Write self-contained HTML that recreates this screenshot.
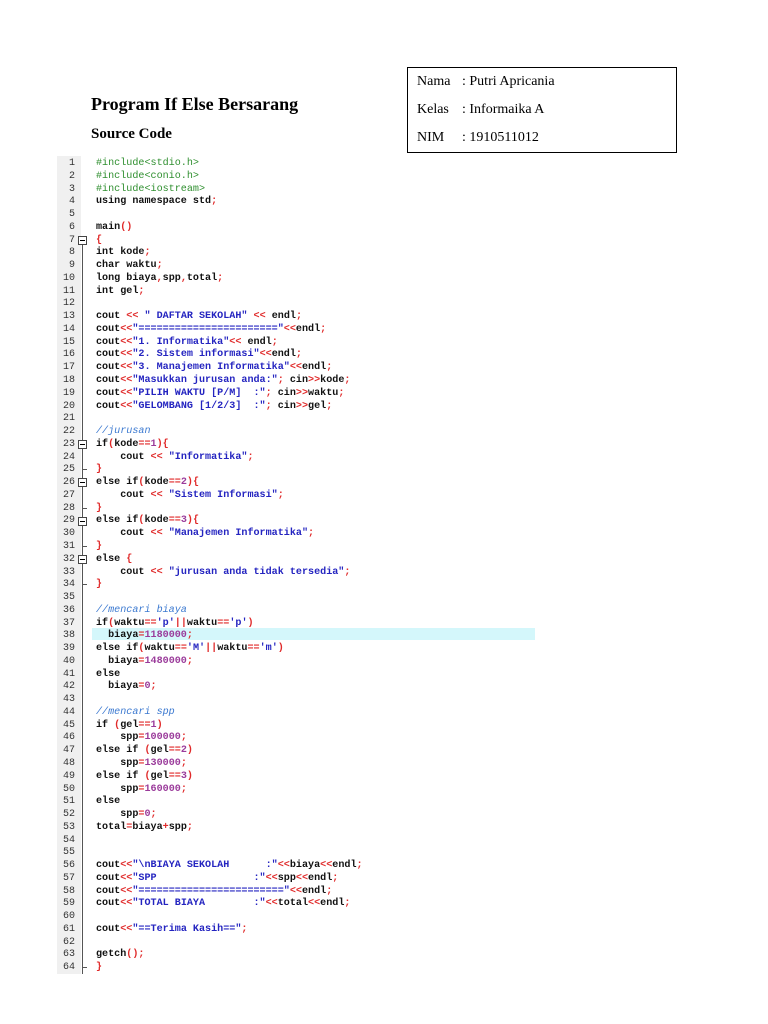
<!DOCTYPE html>
<html><head><meta charset="utf-8"><style>
body{margin:0;background:#fff;width:768px;height:1024px;position:relative;overflow:hidden;font-family:"Liberation Serif",serif}
.box{position:absolute;left:407px;top:67px;width:268px;height:84px;border:1px solid #000}
.box div{position:absolute;left:9px;top:0;font-size:14px;color:#000}
.box span{position:absolute;left:45px;white-space:nowrap}
h1{position:absolute;left:91px;top:94px;margin:0;font-size:18px;font-weight:bold}
h2{position:absolute;left:91px;top:126px;margin:0;font-size:15px;font-weight:bold}
.gut{position:absolute;left:57px;top:156px;width:24px;height:818px;background:#f0f0f0}
.fl{position:absolute;left:82px;width:1px;background:#555}
.hl{position:absolute;left:92px;top:628px;width:443px;height:12px;background:#d4f7fb}
.nums{position:absolute;left:57px;top:158px;width:18px;text-align:right;font:10px/12.76px "Liberation Mono",monospace;color:#333;white-space:pre}
pre{position:absolute;left:96px;top:158px;margin:0;font:10.1px/12.76px "Liberation Mono",monospace;color:#111;font-weight:bold}
.g{color:#2f8f2f;font-weight:normal}.r{color:#e02a2a}.s{color:#2424c0}.n{color:#9a3a9a}.c{color:#3a78d0;font-style:italic;font-weight:normal}
.fb{position:absolute;left:78px;width:9px;height:9px;border:1px solid #444;background:#fff;box-sizing:border-box}
.fb:after{content:"";position:absolute;left:1px;top:3px;width:5px;height:1px;background:#000}
.tk{position:absolute;left:82px;width:5px;height:1px;background:#555}
</style></head><body>
<div class="box">
<div style="top:6px">Nama<span>: Putri Apricania</span></div>
<div style="top:34px">Kelas<span>: Informaika A</span></div>
<div style="top:62px">NIM<span>: 1910511012</span></div>
</div>
<h1>Program If Else Bersarang</h1>
<h2>Source Code</h2>
<div class="gut"></div>
<div class="hl"></div>
<div class="fl" style="top:244px;height:730px"></div>
<div class="fb" style="top:236px"></div>
<div class="fb" style="top:440px"></div><div class="tk" style="top:469px"></div>
<div class="fb" style="top:478px"></div><div class="tk" style="top:508px"></div>
<div class="fb" style="top:517px"></div><div class="tk" style="top:546px"></div>
<div class="fb" style="top:555px"></div><div class="tk" style="top:584px"></div>
<div class="tk" style="top:967px"></div>
<div class="nums">1
2
3
4
5
6
7
8
9
10
11
12
13
14
15
16
17
18
19
20
21
22
23
24
25
26
27
28
29
30
31
32
33
34
35
36
37
38
39
40
41
42
43
44
45
46
47
48
49
50
51
52
53
54
55
56
57
58
59
60
61
62
63
64</div>
<pre><span class="g">#include&lt;stdio.h&gt;</span>
<span class="g">#include&lt;conio.h&gt;</span>
<span class="g">#include&lt;iostream&gt;</span>
using namespace std<span class="r">;</span>

main<span class="r">()</span>
<span class="r">{</span>
int kode<span class="r">;</span>
char waktu<span class="r">;</span>
long biaya<span class="r">,</span>spp<span class="r">,</span>total<span class="r">;</span>
int gel<span class="r">;</span>

cout <span class="r">&lt;&lt;</span> <span class="s">" DAFTAR SEKOLAH"</span> <span class="r">&lt;&lt;</span> endl<span class="r">;</span>
cout<span class="r">&lt;&lt;</span><span class="s">"======================="</span><span class="r">&lt;&lt;</span>endl<span class="r">;</span>
cout<span class="r">&lt;&lt;</span><span class="s">"1. Informatika"</span><span class="r">&lt;&lt;</span> endl<span class="r">;</span>
cout<span class="r">&lt;&lt;</span><span class="s">"2. Sistem informasi"</span><span class="r">&lt;&lt;</span>endl<span class="r">;</span>
cout<span class="r">&lt;&lt;</span><span class="s">"3. Manajemen Informatika"</span><span class="r">&lt;&lt;</span>endl<span class="r">;</span>
cout<span class="r">&lt;&lt;</span><span class="s">"Masukkan jurusan anda:"</span><span class="r">;</span> cin<span class="r">&gt;&gt;</span>kode<span class="r">;</span>
cout<span class="r">&lt;&lt;</span><span class="s">"PILIH WAKTU [P/M]  :"</span><span class="r">;</span> cin<span class="r">&gt;&gt;</span>waktu<span class="r">;</span>
cout<span class="r">&lt;&lt;</span><span class="s">"GELOMBANG [1/2/3]  :"</span><span class="r">;</span> cin<span class="r">&gt;&gt;</span>gel<span class="r">;</span>

<span class="c">//jurusan</span>
if<span class="r">(</span>kode<span class="r">==</span><span class="n">1</span><span class="r">){</span>
    cout <span class="r">&lt;&lt;</span> <span class="s">"Informatika"</span><span class="r">;</span>
<span class="r">}</span>
else if<span class="r">(</span>kode<span class="r">==</span><span class="n">2</span><span class="r">){</span>
    cout <span class="r">&lt;&lt;</span> <span class="s">"Sistem Informasi"</span><span class="r">;</span>
<span class="r">}</span>
else if<span class="r">(</span>kode<span class="r">==</span><span class="n">3</span><span class="r">){</span>
    cout <span class="r">&lt;&lt;</span> <span class="s">"Manajemen Informatika"</span><span class="r">;</span>
<span class="r">}</span>
else <span class="r">{</span>
    cout <span class="r">&lt;&lt;</span> <span class="s">"jurusan anda tidak tersedia"</span><span class="r">;</span>
<span class="r">}</span>

<span class="c">//mencari biaya</span>
if<span class="r">(</span>waktu<span class="r">==</span><span class="s">'p'</span><span class="r">||</span>waktu<span class="r">==</span><span class="s">'p'</span><span class="r">)</span>
  biaya<span class="r">=</span><span class="n">1180000</span><span class="r">;</span>
else if<span class="r">(</span>waktu<span class="r">==</span><span class="s">'M'</span><span class="r">||</span>waktu<span class="r">==</span><span class="s">'m'</span><span class="r">)</span>
  biaya<span class="r">=</span><span class="n">1480000</span><span class="r">;</span>
else
  biaya<span class="r">=</span><span class="n">0</span><span class="r">;</span>

<span class="c">//mencari spp</span>
if <span class="r">(</span>gel<span class="r">==</span><span class="n">1</span><span class="r">)</span>
    spp<span class="r">=</span><span class="n">100000</span><span class="r">;</span>
else if <span class="r">(</span>gel<span class="r">==</span><span class="n">2</span><span class="r">)</span>
    spp<span class="r">=</span><span class="n">130000</span><span class="r">;</span>
else if <span class="r">(</span>gel<span class="r">==</span><span class="n">3</span><span class="r">)</span>
    spp<span class="r">=</span><span class="n">160000</span><span class="r">;</span>
else
    spp<span class="r">=</span><span class="n">0</span><span class="r">;</span>
total<span class="r">=</span>biaya<span class="r">+</span>spp<span class="r">;</span>


cout<span class="r">&lt;&lt;</span><span class="s">"\nBIAYA SEKOLAH      :"</span><span class="r">&lt;&lt;</span>biaya<span class="r">&lt;&lt;</span>endl<span class="r">;</span>
cout<span class="r">&lt;&lt;</span><span class="s">"SPP                :"</span><span class="r">&lt;&lt;</span>spp<span class="r">&lt;&lt;</span>endl<span class="r">;</span>
cout<span class="r">&lt;&lt;</span><span class="s">"========================"</span><span class="r">&lt;&lt;</span>endl<span class="r">;</span>
cout<span class="r">&lt;&lt;</span><span class="s">"TOTAL BIAYA        :"</span><span class="r">&lt;&lt;</span>total<span class="r">&lt;&lt;</span>endl<span class="r">;</span>

cout<span class="r">&lt;&lt;</span><span class="s">"==Terima Kasih=="</span><span class="r">;</span>

getch<span class="r">();</span>
<span class="r">}</span></pre>
</body></html>
